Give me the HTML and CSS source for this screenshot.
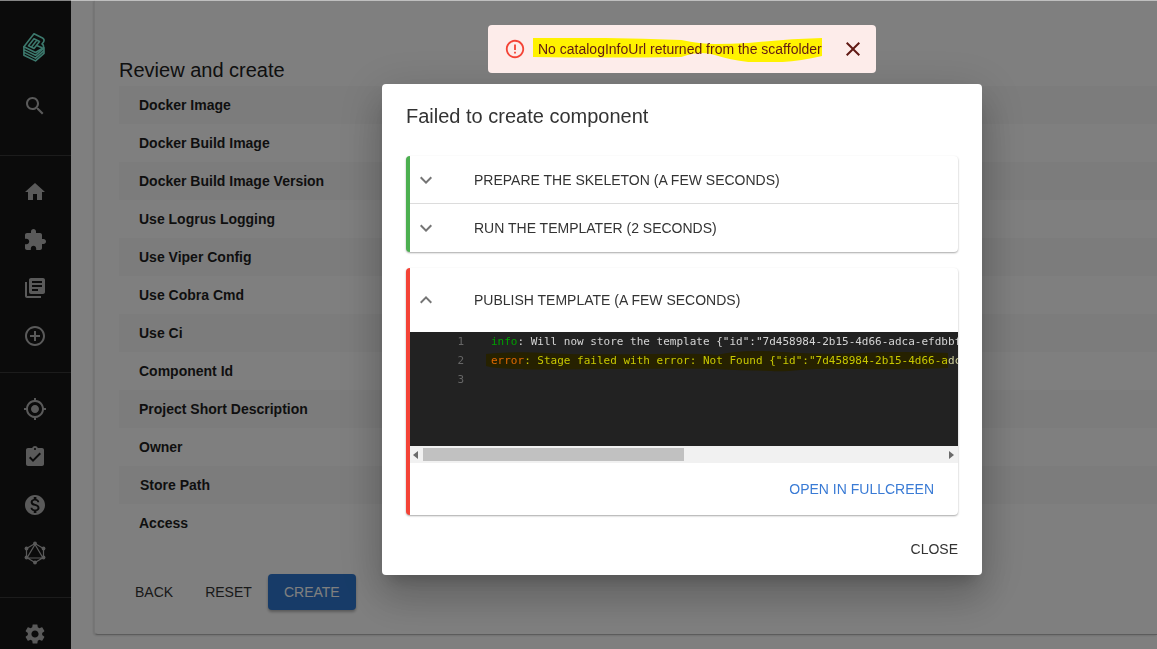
FILE: index.html
```html
<!DOCTYPE html>
<html lang="en">
<head>
<meta charset="utf-8">
<title>Failed to create component</title>
<link rel="stylesheet" href="styles.css">
</head>
<body>
<div class="app">
  <nav class="sidebar">
    <div class="nav-group nav-top">
      <svg class="logo" viewBox="0 0 24 30" fill="none" stroke="#78f2da" stroke-width="1.6" stroke-linejoin="round" stroke-linecap="round">
        <path d="M.9 14.800 11 1.800l8.500 4.200q2.500 1.500 1 4l-1.500 2q2.500 1.500 1 4L12.500 20.500z"/>
        <path d="M5.500 13.800 11 6.800l5.500 2.700-5.500 7zM8.300 15.200l5.500-7M11 16.500l2.500-3 5 2"/>
        <path d="M.9 14.800v2.800l11.600 5.700 8.500-7.500M.9 17.600v2.800l11.600 5.700 8.500-7.500v-2.800M.9 20.400v2.800l11.600 5.700 8.500-7.500v-2.800"/>
      </svg>
      <svg class="icon search-icon" viewBox="0 0 24 24"><path d="M15.500 14h-.79l-.28-.27C15.410 12.590 16 11.110 16 9.500 16 5.910 13.090 3 9.500 3S3 5.910 3 9.500 5.910 16 9.500 16c1.610 0 3.090-.59 4.230-1.570l.27.28v.79l5 4.990L20.490 19l-4.990-5zm-6 0C7.010 14 5 11.990 5 9.500S7.010 5 9.500 5 14 7.010 14 9.500 11.990 14 9.500 14z"/></svg>
    </div>
    <div class="nav-group nav-main">
      <svg class="icon" viewBox="0 0 24 24"><path d="M10 20v-6h4v6h5v-8h3L12 3 2 12h3v8z"/></svg>
      <svg class="icon" viewBox="0 0 24 24"><path d="M20.500 11H19V7c0-1.100-.9-2-2-2h-4V3.500C13 2.120 11.880 1 10.500 1S8 2.120 8 3.500V5H4c-1.100 0-1.990.9-1.990 2v3.800H3.500c1.490 0 2.700 1.210 2.700 2.700s-1.210 2.700-2.700 2.700H2V20c0 1.100.9 2 2 2h3.800v-1.500c0-1.490 1.210-2.700 2.700-2.700 1.490 0 2.700 1.210 2.700 2.700V22H17c1.100 0 2-.9 2-2v-4h1.500c1.380 0 2.500-1.120 2.500-2.500S21.880 11 20.500 11z"/></svg>
      <svg class="icon" viewBox="0 0 24 24"><path d="M4 6H2v14c0 1.100.9 2 2 2h14v-2H4V6zm16-4H8c-1.100 0-2 .9-2 2v12c0 1.100.9 2 2 2h12c1.100 0 2-.9 2-2V4c0-1.100-.9-2-2-2zm-1 9H9V9h10v2zm-4 4H9v-2h6v2zm4-8H9V5h10v2z"/></svg>
      <svg class="icon" viewBox="0 0 24 24"><path d="M13 7h-2v4H7v2h4v4h2v-4h4v-2h-4V7zm-1-5C6.480 2 2 6.480 2 12s4.480 10 10 10 10-4.480 10-10S17.520 2 12 2zm0 18c-4.410 0-8-3.590-8-8s3.590-8 8-8 8 3.590 8 8-3.590 8-8 8z"/></svg>
    </div>
    <div class="nav-group nav-tools">
      <svg class="icon" viewBox="0 0 24 24"><path d="M12 8c-2.210 0-4 1.790-4 4s1.790 4 4 4 4-1.790 4-4-1.790-4-4-4zm8.940 3c-.46-4.170-3.770-7.480-7.940-7.940V1h-2v2.060C6.830 3.520 3.520 6.830 3.060 11H1v2h2.060c.46 4.170 3.770 7.480 7.940 7.940V23h2v-2.060c4.170-.46 7.480-3.770 7.940-7.940H23v-2h-2.060zM12 19c-3.870 0-7-3.130-7-7s3.130-7 7-7 7 3.130 7 7-3.130 7-7 7z"/></svg>
      <svg class="icon" viewBox="0 0 24 24"><path d="M19 3h-4.180C14.400 1.840 13.300 1 12 1c-1.300 0-2.400.84-2.820 2H5c-1.100 0-2 .9-2 2v14c0 1.100.9 2 2 2h14c1.100 0 2-.9 2-2V5c0-1.100-.9-2-2-2zm-7 0c.55 0 1 .45 1 1s-.45 1-1 1-1-.45-1-1 .45-1 1-1zm-2 14l-4-4 1.410-1.410L10 14.170l6.590-6.590L18 9l-8 8z"/></svg>
      <svg class="icon" viewBox="0 0 24 24"><path d="M12 2C6.480 2 2 6.480 2 12s4.480 10 10 10 10-4.480 10-10S17.520 2 12 2zm1.410 16.090V20h-2.670v-1.930c-1.710-.36-3.160-1.460-3.270-3.400h1.960c.1 1.050.82 1.870 2.650 1.870 1.960 0 2.400-.98 2.400-1.590 0-.83-.44-1.610-2.670-2.140-2.480-.6-4.180-1.620-4.180-3.670 0-1.720 1.390-2.840 3.110-3.210V4h2.670v1.950c1.860.45 2.790 1.860 2.870 3.390H14.300c-.05-1.110-.64-1.870-2.220-1.870-1.500 0-2.400.68-2.400 1.640 0 .84.65 1.390 2.670 1.910s4.180 1.390 4.180 3.910c-.01 1.830-1.380 2.830-3.120 3.160z"/></svg>
      <svg class="icon" viewBox="0 0 24 24"><path class="gql-line" d="M12 2.500 20.500 7.500v9L12 21.500 3.500 16.500v-9zM12 3.500 20 17H4z"/><circle cx="12" cy="2.500" r="1.900"/><circle cx="20.500" cy="7.500" r="1.900"/><circle cx="20.500" cy="16.500" r="1.900"/><circle cx="12" cy="21.500" r="1.900"/><circle cx="3.500" cy="16.500" r="1.900"/><circle cx="3.500" cy="7.500" r="1.900"/></svg>
    </div>
    <div class="nav-group nav-bottom">
      <svg class="icon" viewBox="0 0 24 24"><path d="M19.140 12.940c.04-.3.06-.61.06-.94 0-.32-.02-.64-.07-.94l2.030-1.580c.18-.14.23-.41.12-.61l-1.920-3.320c-.12-.22-.37-.29-.59-.22l-2.390.96c-.5-.38-1.030-.7-1.620-.94l-.36-2.540c-.04-.24-.24-.41-.48-.41h-3.840c-.24 0-.43.17-.47.41l-.36 2.540c-.59.24-1.130.57-1.620.94l-2.390-.96c-.22-.08-.47 0-.59.22L2.740 8.870c-.12.21-.08.47.12.61l2.030 1.580c-.05.3-.09.63-.09.94s.02.64.07.94l-2.030 1.580c-.18.14-.23.41-.12.61l1.920 3.320c.12.22.37.29.59.22l2.390-.96c.5.38 1.030.7 1.620.94l.36 2.540c.05.24.24.41.48.41h3.840c.24 0 .44-.17.47-.41l.36-2.540c.59-.24 1.130-.56 1.620-.94l2.390.96c.22.08.47 0 .59-.22l1.920-3.320c.12-.22.07-.47-.12-.61l-2.010-1.580zM12 15.600c-1.980 0-3.600-1.620-3.600-3.600s1.620-3.600 3.600-3.600 3.600 1.620 3.600 3.600-1.620 3.600-3.600 3.600z"/></svg>
    </div>
  </nav>
  <main class="main">
    <section class="card">
      <h2 class="review-title">Review and create</h2>
      <div class="rows">
        <div class="row">Docker Image</div>
        <div class="row">Docker Build Image</div>
        <div class="row">Docker Build Image Version</div>
        <div class="row">Use Logrus Logging</div>
        <div class="row">Use Viper Config</div>
        <div class="row">Use Cobra Cmd</div>
        <div class="row">Use Ci</div>
        <div class="row">Component Id</div>
        <div class="row">Project Short Description</div>
        <div class="row">Owner</div>
        <div class="row row-shift">Store Path</div>
        <div class="row">Access</div>
      </div>
      <div class="actions">
        <span class="btn-text">BACK</span>
        <span class="btn-text">RESET</span>
        <span class="btn-primary">CREATE</span>
      </div>
    </section>
  </main>
</div>

<div class="scrim"></div>

<div class="dialog">
  <h2 class="dialog-title">Failed to create component</h2>
  <div class="accordion acc-ok">
    <div class="acc-head acc-divider">
      <svg class="chev" viewBox="0 0 24 24"><path d="M16.590 8.590L12 13.170 7.410 8.590 6 10l6 6 6-6z"/></svg>
      <span>PREPARE THE SKELETON (A FEW SECONDS)</span>
    </div>
    <div class="acc-head">
      <svg class="chev" viewBox="0 0 24 24"><path d="M16.590 8.590L12 13.170 7.410 8.590 6 10l6 6 6-6z"/></svg>
      <span>RUN THE TEMPLATER (2 SECONDS)</span>
    </div>
  </div>
  <div class="accordion acc-fail">
    <div class="acc-head acc-tall">
      <svg class="chev" viewBox="0 0 24 24"><path d="M12 8l-6 6 1.410 1.410L12 10.830l4.590 4.580L18 14z"/></svg>
      <span>PUBLISH TEMPLATE (A FEW SECONDS)</span>
    </div>
    <div class="log">
      <svg class="log-marker" viewBox="0 0 470 24" preserveAspectRatio="none"><path d="M0 5 Q30 2 60 4 T160 5 T235 6 Q260 0 300 3 T380 4 T470 4 V19 Q420 21 380 20 T320 21 T290 22 Q250 21 235 20 T120 20 T40 20 Q10 20 0 17z"/></svg>
      <div class="log-line"><span class="ln">1</span><span class="log-text"><span class="t-green">info</span>: Will now store the template {"id":"7d458984-2b15-4d66-adca-efdbbf</span></div>
      <div class="log-line"><span class="ln">2</span><span class="log-text t-yellow"><span class="t-orange">error</span>: Stage failed with error: Not Found {"id":"7d458984-2b15-4d66-a<span class="t-pale">dc</span></span></div>
      <div class="log-line"><span class="ln">3</span></div>
    </div>
    <div class="scrollbar">
      <svg class="sb-arrow" viewBox="0 0 6 8"><path d="M5 0v8L0 4z"/></svg>
      <div class="sb-track"><div class="sb-thumb"></div></div>
      <svg class="sb-arrow" viewBox="0 0 6 8"><path d="M1 0v8l5-4z"/></svg>
    </div>
    <div class="acc-actions"><span class="link-btn">OPEN IN FULLCREEN</span></div>
  </div>
  <div class="dialog-actions"><span class="close-btn">CLOSE</span></div>
</div>

<div class="snackbar">
  <svg class="snack-icon" viewBox="0 0 24 24"><path d="M11 15h2v2h-2zm0-8h2v6h-2zm.99-5C6.470 2 2 6.480 2 12s4.470 10 9.990 10C17.520 22 22 17.520 22 12S17.520 2 11.990 2zM12 20c-4.420 0-8-3.580-8-8s3.580-8 8-8 8 3.580 8 8-3.580 8-8 8z"/></svg>
  <div class="snack-msg">
    <svg class="snack-marker" viewBox="0 0 286 24" preserveAspectRatio="none"><path d="M0 0 Q70 -1 147 2 Q165 6 180 6 T213 5 Q250 1 286 0 V18 Q265 23 247 24 T213 24 Q195 22 180 17 T147 19 Q70 20 0 19z"/></svg>
    <span class="snack-text">No catalogInfoUrl returned from the scaffolder</span>
  </div>
  <svg class="snack-close" viewBox="0 0 24 24"><path d="M19 6.410L17.590 5 12 10.590 6.410 5 5 6.410 10.590 12 5 17.590 6.410 19 12 13.410 17.590 19 19 17.590 13.410 12z"/></svg>
</div>
</body>
</html>
```
FILE: styles.css
```css
* { box-sizing: border-box; }
html, body { margin: 0; height: 100%; overflow: hidden; }
body { font-family: "Liberation Sans", Arial, sans-serif; font-size: 14px; color: #333; background: #fff; }

.app { display: flex; height: 649px; }

.sidebar { width: 71px; flex: none; background: #171717; display: flex; flex-direction: column; }
.nav-group { display: flex; flex-direction: column; align-items: center; padding-right: 1px; border-bottom: 1px solid #383838; }
.nav-top { height: 156px; padding-top: 32px; }
.nav-main { height: 217px; padding-top: 24px; gap: 24px; }
.nav-tools { height: 225px; padding-top: 24px; gap: 24px; }
.nav-bottom { border-bottom: 0; padding-top: 24px; }
.logo { width: 24px; height: 30px; flex: none; }
.icon { width: 24px; height: 24px; flex: none; fill: #b5b5b5; }
.search-icon { margin-top: 32px; }
.gql-line { fill: none; stroke: #b5b5b5; stroke-width: 1.2; }

.main { flex: 1; min-width: 0; padding: 0 0 14px 23px; background: #fff; }
.card { height: 100%; background: #fff; border-left: 1px solid #ececec; border-bottom: 1px solid #b8b8b8; border-bottom-left-radius: 4px; padding: 58px 0 0 24px; box-shadow: -1px 1px 2px rgba(0,0,0,.12); }
.review-title { margin: 0; font-size: 20px; font-weight: 400; line-height: 24px; height: 28px; color: #212121; }
.rows { display: flex; flex-direction: column; }
.row { height: 38px; display: flex; align-items: center; padding-left: 20px; font-weight: 700; color: #1f1f1f; }
.row:nth-child(odd) { background: #f8f8f8; }
.row-shift { padding-left: 21px; }
.actions { display: flex; align-items: center; margin-top: 32px; padding-left: 16px; gap: 32px; }
.btn-text { color: #333; }
.btn-primary { background: #2e77d0; color: #fff; height: 36px; width: 88px; border-radius: 4px; display: flex; align-items: center; justify-content: center; margin-left: -16px; box-shadow: 0 2px 3px rgba(0,0,0,.3); }

.scrim { position: fixed; inset: 0; background: rgba(0,0,0,.5); box-shadow: inset 0 1px 0 rgba(255,255,255,.5); }

.dialog { position: fixed; left: 382px; top: 84px; width: 600px; height: 491px; background: #fff; border-radius: 4px; padding: 20px 24px 0; display: flex; flex-direction: column; box-shadow: 0 11px 15px -7px rgba(0,0,0,.2), 0 24px 38px 3px rgba(0,0,0,.14), 0 9px 46px 8px rgba(0,0,0,.12); }
.dialog-title { margin: 0 0 28px; font-size: 20px; font-weight: 400; line-height: 24px; color: #333; }
.accordion { background: #fff; border-radius: 4px; box-shadow: 0 1px 2px rgba(0,0,0,.35); }
.acc-ok { border-left: 4px solid #4caf50; }
.acc-fail { border-left: 4px solid #f44336; margin-top: 16px; }
.acc-head { height: 48px; display: flex; align-items: center; padding-left: 4px; gap: 36px; color: #333; }
.acc-divider { border-bottom: 1px solid #dcdcdc; }
.acc-tall { height: 64px; }
.chev { width: 24px; height: 24px; fill: #757575; flex: none; }

.log { position: relative; height: 114px; background: #222; overflow: hidden; font-family: "DejaVu Sans Mono", monospace; font-size: 11px; }
.log-marker { position: absolute; left: 76px; top: 17px; width: 462px; height: 24px; fill: #262100; }
.log-line { position: relative; display: flex; height: 19px; line-height: 19px; white-space: nowrap; }
.ln { width: 54px; flex: none; text-align: right; color: #666; }
.log-text { margin-left: 27px; color: #d4d4d4; }
.t-green { color: #00a000; }
.t-orange { color: #e06800; }
.t-yellow { color: #c8c800; }
.t-pale { color: #cfcf9a; }

.scrollbar { height: 17px; background: #f1f1f1; display: flex; align-items: center; }
.sb-arrow { width: 6px; height: 8px; fill: #6a6a6a; flex: none; margin: 0 4px 0 3px; }
.sb-track { flex: 1; height: 13px; }
.sb-thumb { width: 261px; height: 13px; background: #c1c1c1; }

.acc-actions { height: 52px; display: flex; align-items: center; justify-content: flex-end; padding-right: 24px; }
.link-btn { color: #3a7bd5; }
.dialog-actions { display: flex; justify-content: flex-end; margin-top: 26px; }
.close-btn { color: #333; }

.snackbar { position: fixed; left: 488px; top: 25px; width: 388px; height: 48px; background: #fdecea; border-radius: 4px; display: flex; align-items: center; padding-left: 16px; }
.snack-icon { width: 22px; height: 22px; fill: #f44336; flex: none; }
.snack-msg { position: relative; margin-left: 12px; width: 300px; display: flex; align-items: center; }
.snack-marker { position: absolute; left: -5px; top: -3px; width: 289px; height: 24px; fill: #fff200; }
.snack-text { position: relative; color: #611a15; white-space: nowrap; }
.snack-close { width: 24px; height: 24px; fill: #611a15; flex: none; margin-left: 3px; }
```
